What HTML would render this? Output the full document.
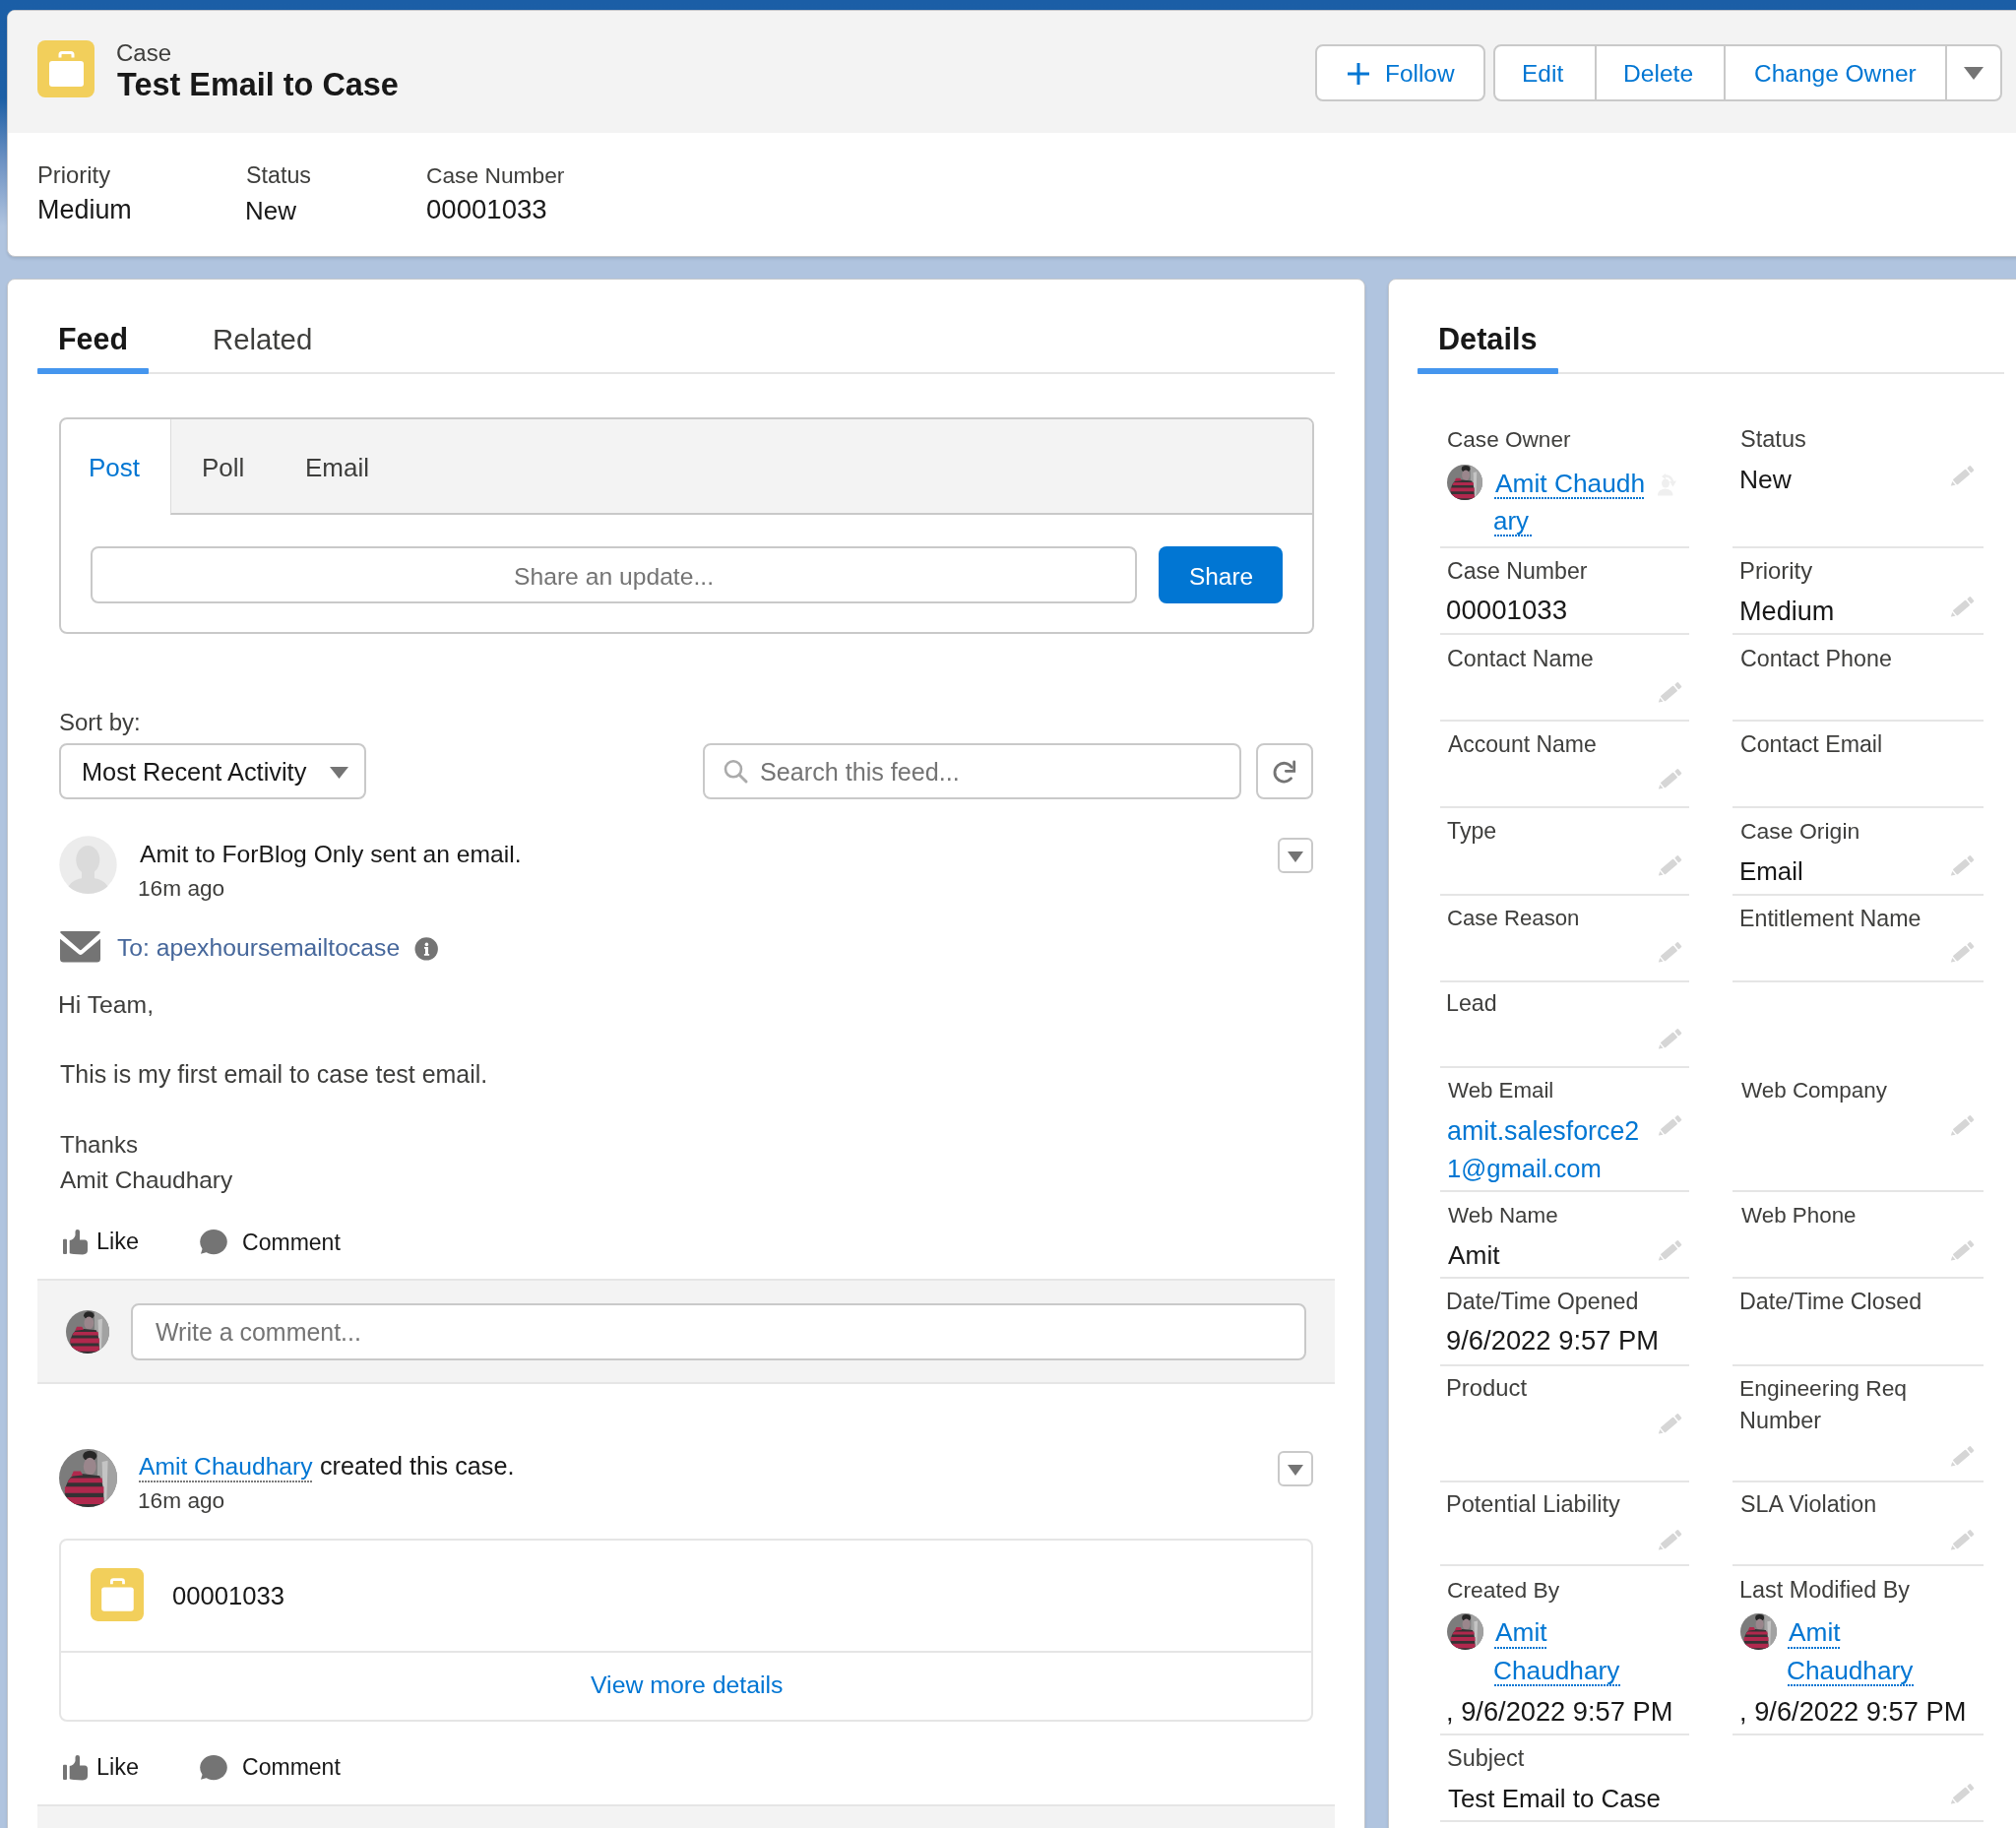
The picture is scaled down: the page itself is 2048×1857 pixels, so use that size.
<!DOCTYPE html>
<html><head><meta charset="utf-8"><title>Case</title>
<style>
html,body{margin:0;padding:0;}
body{width:2048px;height:1857px;overflow:hidden;position:relative;font-family:"Liberation Sans",sans-serif;
background:linear-gradient(to bottom,#1b5ea6 0px,#1c5fa6 100px,#6f93c4 165px,#b0c4df 230px,#b0c4df 100%);}
.t{position:absolute;white-space:nowrap;-webkit-font-smoothing:antialiased;will-change:transform;}
.r{position:absolute;}
</style></head><body>
<div class="r" style="left:7px;top:10px;width:2093px;height:251px;background:#fff;border:1px solid #c4c7cc;border-radius:8px;box-sizing:border-box;box-shadow:0 2px 3px rgba(0,0,0,0.10);"></div>
<div class="r" style="left:8px;top:11px;width:2092px;height:124px;background:#f3f3f3;border-radius:7px 0 0 0;"></div>
<div class="r" style="left:38px;top:41px;width:58px;height:58px;background:#f2cf5b;border-radius:8.0px;"></div>
<svg class="r" style="left:38px;top:41px" width="58" height="58" viewBox="0 0 58 58"><rect x="12" y="21" width="35" height="26" rx="3" fill="#fff"/><path d="M23 17.5 v-3 a2 2 0 0 1 2 -2 h9 a2 2 0 0 1 2 2 v3" stroke="#fff" stroke-width="3" fill="none"/></svg>
<div class="t" style="left:118.00px;top:38.87px;font-size:24.02px;line-height:30px;color:#3e3e3c;">Case</div>
<div class="t" style="left:118.88px;top:66.26px;font-size:32.43px;line-height:41px;color:#181818;font-weight:700;">Test Email to Case</div>
<div class="r" style="left:1336px;top:45px;width:173px;height:58px;background:#fff;border:2px solid #c9c9c9;border-radius:8px;box-sizing:border-box;"></div>
<svg class="r" style="left:1369px;top:64px" width="22" height="22" viewBox="0 0 22 22"><path d="M11 0 V22 M0 11 H22" stroke="#0176d3" stroke-width="3"/></svg>
<div class="t" style="left:1406.85px;top:59.14px;font-size:24.41px;line-height:31px;color:#0176d3;">Follow</div>
<div class="r" style="left:1517px;top:45px;width:517px;height:58px;background:#fff;border:2px solid #c9c9c9;border-radius:8px;box-sizing:border-box;"></div>
<div class="r" style="left:1620px;top:47px;width:2px;height:54px;background:#c9c9c9;"></div>
<div class="r" style="left:1751px;top:47px;width:2px;height:54px;background:#c9c9c9;"></div>
<div class="r" style="left:1976px;top:47px;width:2px;height:54px;background:#c9c9c9;"></div>
<div class="t" style="left:1546.44px;top:59.01px;font-size:24.50px;line-height:31px;color:#0176d3;">Edit</div>
<div class="t" style="left:1649.43px;top:58.97px;font-size:24.60px;line-height:31px;color:#0176d3;">Delete</div>
<div class="t" style="left:1782.28px;top:59.01px;font-size:24.49px;line-height:31px;color:#0176d3;">Change Owner</div>
<svg class="r" style="left:1995px;top:68px" width="20" height="13" viewBox="0 0 20 13"><path d="M0 0 H20 L10 13 Z" fill="#747474"/></svg>
<div class="t" style="left:37.50px;top:163.25px;font-size:23.80px;line-height:30px;color:#3e3e3c;">Priority</div>
<div class="t" style="left:37.54px;top:196.46px;font-size:26.95px;line-height:34px;color:#181818;">Medium</div>
<div class="t" style="left:249.84px;top:163.93px;font-size:23.27px;line-height:29px;color:#3e3e3c;">Status</div>
<div class="t" style="left:249.23px;top:197.81px;font-size:25.94px;line-height:32px;color:#181818;">New</div>
<div class="t" style="left:432.76px;top:164.41px;font-size:22.77px;line-height:28px;color:#3e3e3c;">Case Number</div>
<div class="t" style="left:432.80px;top:196.14px;font-size:27.57px;line-height:34px;color:#181818;">00001033</div>
<div class="r" style="left:7px;top:283px;width:1380px;height:1717px;background:#fff;border:1px solid #c4c7cc;border-radius:8px;box-sizing:border-box;box-shadow:0 2px 3px rgba(0,0,0,0.10);"></div>
<div class="t" style="left:59.12px;top:324.95px;font-size:30.43px;line-height:38px;color:#181818;font-weight:700;">Feed</div>
<div class="t" style="left:216.35px;top:325.81px;font-size:29.39px;line-height:37px;color:#3e3e3c;">Related</div>
<div class="r" style="left:38px;top:378px;width:1318px;height:2px;background:#e5e5e5;"></div>
<div class="r" style="left:38px;top:374px;width:113px;height:6px;background:#4596ee;border-radius:1px;"></div>
<div class="r" style="left:60px;top:424px;width:1275px;height:220px;background:#fff;border:2px solid #c9c9c9;border-radius:8px;box-sizing:border-box;"></div>
<div class="r" style="left:173px;top:426px;width:1160px;height:97px;background:#f3f3f3;border-left:1px solid #dcdcdc;border-bottom:2px solid #c9c9c9;box-sizing:border-box;border-radius:0 6px 0 0;"></div>
<div class="t" style="left:90.22px;top:458.59px;font-size:26.00px;line-height:32px;color:#0176d3;">Post</div>
<div class="t" style="left:204.72px;top:458.59px;font-size:26.00px;line-height:32px;color:#3e3e3c;">Poll</div>
<div class="t" style="left:309.52px;top:458.59px;font-size:26.00px;line-height:32px;color:#3e3e3c;">Email</div>
<div class="r" style="left:92px;top:555px;width:1063px;height:58px;background:#fff;border:2px solid #c9c9c9;border-radius:8px;box-sizing:border-box;"></div>
<div class="t" style="left:521.97px;top:569.54px;font-size:24.68px;line-height:31px;color:#747474;">Share an update...</div>
<div class="r" style="left:1177px;top:555px;width:126px;height:58px;background:#0176d3;border-radius:8px;"></div>
<div class="t" style="left:1207.78px;top:569.53px;font-size:24.42px;line-height:31px;color:#fff;">Share</div>
<div class="t" style="left:59.70px;top:719.18px;font-size:23.99px;line-height:30px;color:#3e3e3c;">Sort by:</div>
<div class="r" style="left:60px;top:755px;width:312px;height:57px;background:#fff;border:2px solid #c9c9c9;border-radius:8px;box-sizing:border-box;"></div>
<div class="t" style="left:82.67px;top:768.20px;font-size:25.37px;line-height:32px;color:#181818;">Most Recent Activity</div>
<svg class="r" style="left:335px;top:779px" width="19" height="12" viewBox="0 0 19 12"><path d="M0 0 H19 L9.5 12 Z" fill="#747474"/></svg>
<div class="r" style="left:714px;top:755px;width:547px;height:57px;background:#fff;border:2px solid #c9c9c9;border-radius:8px;box-sizing:border-box;"></div>
<svg class="r" style="left:735px;top:772px" width="25" height="24" viewBox="0 0 25 24"><circle cx="10" cy="9.3" r="8" stroke="#ababab" stroke-width="2.6" fill="none"/><path d="M16.2 15.2 L23 22" stroke="#ababab" stroke-width="2.9" stroke-linecap="round"/></svg>
<div class="t" style="left:772.34px;top:768.98px;font-size:25.16px;line-height:31px;color:#747474;">Search this feed...</div>
<div class="r" style="left:1276px;top:755px;width:58px;height:57px;background:#fff;border:2px solid #c9c9c9;border-radius:8px;box-sizing:border-box;"></div>
<svg class="r" style="left:1293px;top:772px" width="25" height="25" viewBox="0 0 25 25"><path d="M19.1 7.3 A9.4 9.4 0 1 0 18.6 18.7" stroke="#747474" stroke-width="2.8" fill="none" stroke-linecap="round"/><path d="M13.3 11.3 H21.7 V1.9" stroke="#747474" stroke-width="2.8" fill="none" stroke-linecap="round" stroke-linejoin="miter"/></svg>
<svg class="r" style="left:60px;top:849px" width="59" height="59" viewBox="0 0 59 59"><circle cx="29.5" cy="29.5" r="29.2" fill="#ececec"/><ellipse cx="29.3" cy="24.5" rx="12" ry="14.5" fill="#dbdbdb"/><rect x="23" y="32" width="13" height="13" fill="#dbdbdb"/><path d="M9.5 51.5 Q14 44 24 43 H35 Q45 44 49.5 51.5 Q41 59 29.5 59 Q18 59 9.5 51.5Z" fill="#dbdbdb"/></svg>
<div class="t" style="left:141.80px;top:852.45px;font-size:24.65px;line-height:31px;color:#181818;">Amit to ForBlog Only sent an email.</div>
<div class="t" style="left:139.99px;top:887.54px;font-size:22.68px;line-height:28px;color:#3e3e3c;">16m ago</div>
<div class="r" style="left:1298px;top:851px;width:36px;height:36px;background:#fff;border:2px solid #c9c9c9;border-radius:6px;box-sizing:border-box;"></div>
<svg class="r" style="left:1308px;top:865px" width="16" height="12" viewBox="0 0 16 12"><path d="M0 0 H16 L8 11 Z" fill="#747474"/></svg>
<svg class="r" style="left:61px;top:946px" width="41" height="32" viewBox="0 0 41 32"><path d="M1.5 0 H39.5 Q41.5 0 40.5 1.8 L21.8 18.8 Q20.8 19.7 19.8 18.8 L0.5 1.8 Q-0.5 0 1.5 0 Z" fill="#747474"/><path d="M0 7.8 L19 23.2 Q20.8 24.6 22.6 23.2 L41 7.8 V28 Q41 31.5 37.5 31.5 H3.5 Q0 31.5 0 28 Z" fill="#747474"/></svg>
<div class="t" style="left:118.91px;top:946.63px;font-size:24.72px;line-height:31px;color:#46679b;">To: apexhoursemailtocase</div>
<svg class="r" style="left:421px;top:952px" width="25" height="25" viewBox="0 0 25 25"><circle cx="12.2" cy="11.9" r="11.7" fill="#747474"/><circle cx="12.4" cy="7.4" r="1.8" fill="#fff"/><path d="M10 10 H14 V17 H15.1 V18.8 H9.9 V17 H11 V11.8 H10 Z" fill="#fff"/></svg>
<div class="t" style="left:59.22px;top:1005.23px;font-size:24.73px;line-height:31px;color:#3e3e3c;">Hi Team,</div>
<div class="t" style="left:60.70px;top:1075.54px;font-size:24.97px;line-height:31px;color:#3e3e3c;">This is my first email to case test email.</div>
<div class="t" style="left:60.72px;top:1147.75px;font-size:24.10px;line-height:30px;color:#3e3e3c;">Thanks</div>
<div class="t" style="left:61.20px;top:1182.62px;font-size:24.45px;line-height:31px;color:#3e3e3c;">Amit Chaudhary</div>
<svg class="r" style="left:63px;top:1249px" width="27" height="26" viewBox="0 0 27 26"><rect x="1" y="9.7" width="4" height="15.3" rx="1" fill="#747474"/><path d="M7.7 11 Q12 10.5 13.5 6 V2 Q13.5 0 15.75 0 Q18 0 18 2 V10.5 H23 Q26 10.5 26 14 V21 Q26 25.4 21 25.4 L12 25 Q7.7 24.6 7.7 24 Z" fill="#747474"/></svg>
<div class="t" style="left:97.52px;top:1247.35px;font-size:23.51px;line-height:29px;color:#181818;">Like</div>
<svg class="r" style="left:203px;top:1249px" width="28" height="26" viewBox="0 0 28 26"><ellipse cx="14" cy="12.6" rx="13.8" ry="12.6" fill="#747474"/><path d="M3 18 L1 24.8 L9 22.5 Z" fill="#747474"/></svg>
<div class="t" style="left:245.95px;top:1247.51px;font-size:23.04px;line-height:29px;color:#181818;">Comment</div>
<div class="r" style="left:38px;top:1299px;width:1318px;height:107px;background:#f3f3f3;border-top:2px solid #e5e5e5;border-bottom:2px solid #e5e5e5;box-sizing:border-box;"></div>
<svg class="r" style="left:67px;top:1331px" width="44" height="44" viewBox="0 0 100 100"><defs><clipPath id="c1"><circle cx="50" cy="50" r="50"/></clipPath></defs><g clip-path="url(#c1)"><rect width="100" height="100" fill="#7c7c7c"/><rect x="66" width="34" height="100" fill="#a2a2a2"/><path d="M74 22 L84 20 L82 88 L76 90Z" fill="#c4c4c4"/><ellipse cx="53" cy="12" rx="12" ry="9" fill="#262626"/><ellipse cx="53" cy="30" rx="11" ry="15" fill="#9a868c"/><path d="M12 100 L10 72 Q13 52 26 44 L42 43 L70 46 Q78 60 77 100Z" fill="#343234"/><path d="M20 50 L74 50 L75 58 L15 58 Q16 53 20 50Z M25 38 L37 38 L41 45 L21 47Z M10 65 H77 V76 H10Z M13 83 H77 V95 H13Z" fill="#b0284d"/></g></svg>
<div class="r" style="left:133px;top:1324px;width:1194px;height:58px;background:#fff;border:2px solid #c9c9c9;border-radius:8px;box-sizing:border-box;"></div>
<div class="t" style="left:157.90px;top:1337.95px;font-size:24.96px;line-height:31px;color:#747474;">Write a comment...</div>
<svg class="r" style="left:60px;top:1472px" width="59" height="59" viewBox="0 0 100 100"><defs><clipPath id="c2"><circle cx="50" cy="50" r="50"/></clipPath></defs><g clip-path="url(#c2)"><rect width="100" height="100" fill="#7c7c7c"/><rect x="66" width="34" height="100" fill="#a2a2a2"/><path d="M74 22 L84 20 L82 88 L76 90Z" fill="#c4c4c4"/><ellipse cx="53" cy="12" rx="12" ry="9" fill="#262626"/><ellipse cx="53" cy="30" rx="11" ry="15" fill="#9a868c"/><path d="M12 100 L10 72 Q13 52 26 44 L42 43 L70 46 Q78 60 77 100Z" fill="#343234"/><path d="M20 50 L74 50 L75 58 L15 58 Q16 53 20 50Z M25 38 L37 38 L41 45 L21 47Z M10 65 H77 V76 H10Z M13 83 H77 V95 H13Z" fill="#b0284d"/></g></svg>
<div class="t" style="left:141.30px;top:1474.36px;font-size:24.63px;line-height:31px;color:#0176d3;">Amit Chaudhary</div>
<div class="r" style="left:141px;top:1503.5px;width:177px;height:2px;background:repeating-linear-gradient(90deg,#7a7a7a 0 2px,transparent 2px 3px);"></div>
<div class="t" style="left:324.79px;top:1474.17px;font-size:25.19px;line-height:31px;color:#181818;">created this case.</div>
<div class="t" style="left:139.99px;top:1510.04px;font-size:22.68px;line-height:28px;color:#3e3e3c;">16m ago</div>
<div class="r" style="left:1298px;top:1474px;width:36px;height:36px;background:#fff;border:2px solid #c9c9c9;border-radius:6px;box-sizing:border-box;"></div>
<svg class="r" style="left:1308px;top:1488px" width="16" height="12" viewBox="0 0 16 12"><path d="M0 0 H16 L8 11 Z" fill="#747474"/></svg>
<div class="r" style="left:60px;top:1563px;width:1274px;height:186px;background:#fff;border:2px solid #e5e5e5;border-radius:8px;box-sizing:border-box;"></div>
<div class="r" style="left:62px;top:1677px;width:1270px;height:2px;background:#e5e5e5;"></div>
<div class="r" style="left:92px;top:1593px;width:54px;height:54px;background:#f2cf5b;border-radius:7.4px;"></div>
<svg class="r" style="left:92px;top:1593px" width="54" height="54" viewBox="0 0 58 58"><rect x="12" y="21" width="35" height="26" rx="3" fill="#fff"/><path d="M23 17.5 v-3 a2 2 0 0 1 2 -2 h9 a2 2 0 0 1 2 2 v3" stroke="#fff" stroke-width="3" fill="none"/></svg>
<div class="t" style="left:175.47px;top:1605.01px;font-size:25.65px;line-height:32px;color:#181818;">00001033</div>
<div class="t" style="left:599.75px;top:1696.19px;font-size:24.83px;line-height:31px;color:#0176d3;">View more details</div>
<svg class="r" style="left:63px;top:1782.7px" width="27" height="26.0" viewBox="0 0 27 26.0"><rect x="1" y="9.7" width="4" height="15.3" rx="1" fill="#747474"/><path d="M7.7 11 Q12 10.5 13.5 6 V2 Q13.5 0 15.75 0 Q18 0 18 2 V10.5 H23 Q26 10.5 26 14 V21 Q26 25.4 21 25.4 L12 25 Q7.7 24.6 7.7 24 Z" fill="#747474"/></svg>
<div class="t" style="left:97.52px;top:1781.05px;font-size:23.51px;line-height:29px;color:#181818;">Like</div>
<svg class="r" style="left:203px;top:1782.7px" width="28" height="26.0" viewBox="0 0 28 26.0"><ellipse cx="14" cy="12.6" rx="13.8" ry="12.6" fill="#747474"/><path d="M3 18 L1 24.8 L9 22.5 Z" fill="#747474"/></svg>
<div class="t" style="left:245.95px;top:1781.21px;font-size:23.04px;line-height:29px;color:#181818;">Comment</div>
<div class="r" style="left:38px;top:1833px;width:1318px;height:67px;background:#f3f3f3;border-top:2px solid #e5e5e5;box-sizing:border-box;"></div>
<div class="r" style="left:1410px;top:283px;width:690px;height:1717px;background:#fff;border:1px solid #c4c7cc;border-radius:8px;box-sizing:border-box;box-shadow:0 2px 3px rgba(0,0,0,0.10);"></div>
<div class="t" style="left:1461.36px;top:324.88px;font-size:30.63px;line-height:38px;color:#181818;font-weight:700;">Details</div>
<div class="r" style="left:1440px;top:378px;width:596px;height:2px;background:#e5e5e5;"></div>
<div class="r" style="left:1440px;top:374px;width:143px;height:6px;background:#4596ee;border-radius:1px;"></div>
<div class="t" style="left:1469.57px;top:433.17px;font-size:22.59px;line-height:28px;color:#3e3e3c;">Case Owner</div>
<div class="t" style="left:1767.62px;top:432.03px;font-size:23.56px;line-height:29px;color:#3e3e3c;">Status</div>
<svg class="r" style="left:1470px;top:472px" width="36" height="36" viewBox="0 0 100 100"><defs><clipPath id="c3"><circle cx="50" cy="50" r="50"/></clipPath></defs><g clip-path="url(#c3)"><rect width="100" height="100" fill="#7c7c7c"/><rect x="66" width="34" height="100" fill="#a2a2a2"/><path d="M74 22 L84 20 L82 88 L76 90Z" fill="#c4c4c4"/><ellipse cx="53" cy="12" rx="12" ry="9" fill="#262626"/><ellipse cx="53" cy="30" rx="11" ry="15" fill="#9a868c"/><path d="M12 100 L10 72 Q13 52 26 44 L42 43 L70 46 Q78 60 77 100Z" fill="#343234"/><path d="M20 50 L74 50 L75 58 L15 58 Q16 53 20 50Z M25 38 L37 38 L41 45 L21 47Z M10 65 H77 V76 H10Z M13 83 H77 V95 H13Z" fill="#b0284d"/></g></svg>
<div class="t" style="left:1518.50px;top:474.78px;font-size:26.31px;line-height:33px;color:#0176d3;">Amit Chaudh</div>
<div class="r" style="left:1518px;top:505px;width:152px;height:2px;background:repeating-linear-gradient(90deg,#0176d3 0 2px,transparent 2px 3px);"></div>
<div class="t" style="left:1517.46px;top:513.29px;font-size:26.00px;line-height:32px;color:#0176d3;">ary</div>
<div class="r" style="left:1518px;top:543px;width:39px;height:2px;background:repeating-linear-gradient(90deg,#0176d3 0 2px,transparent 2px 3px);"></div>
<svg class="r" style="left:1684px;top:480px" width="22" height="24" viewBox="0 0 22 24"><ellipse cx="8" cy="11" rx="4" ry="4.5" fill="#efefef"/><path d="M0 23.6 Q0 17 7.7 16.5 Q15.5 17 15.5 23.6Z" fill="#efefef"/><path d="M6 4 Q13 2 15.5 10" stroke="#efefef" stroke-width="2.4" fill="none"/><path d="M12 9 L19 8.5 L15.5 14.5Z M4 4 L8 1 L8 7Z" fill="#efefef"/></svg>
<div class="t" style="left:1766.89px;top:471.15px;font-size:26.41px;line-height:33px;color:#181818;">New</div>
<svg class="r" style="left:1973px;top:466px" width="36" height="36" viewBox="0 0 36 36"><g transform="rotate(-40 19.5 18.5)" fill="#d6d6d6"><rect x="11" y="15" width="17" height="7" rx="0.8"/><rect x="29.5" y="15.25" width="4.5" height="6.5" rx="1"/><path d="M9.6 16 L9.6 21 L5.6 18.5 Z"/></g></svg>
<div class="r" style="left:1463px;top:555px;width:253px;height:2px;background:#e5e5e5;"></div>
<div class="r" style="left:1760px;top:555px;width:255px;height:2px;background:#e5e5e5;"></div>
<div class="t" style="left:1469.55px;top:566.49px;font-size:23.10px;line-height:29px;color:#3e3e3c;">Case Number</div>
<div class="t" style="left:1767.09px;top:565.48px;font-size:23.84px;line-height:30px;color:#3e3e3c;">Priority</div>
<div class="t" style="left:1469.39px;top:602.41px;font-size:27.67px;line-height:35px;color:#181818;">00001033</div>
<div class="t" style="left:1766.83px;top:603.61px;font-size:27.10px;line-height:34px;color:#181818;">Medium</div>
<svg class="r" style="left:1973px;top:599px" width="36" height="36" viewBox="0 0 36 36"><g transform="rotate(-40 19.5 18.5)" fill="#d6d6d6"><rect x="11" y="15" width="17" height="7" rx="0.8"/><rect x="29.5" y="15.25" width="4.5" height="6.5" rx="1"/><path d="M9.6 16 L9.6 21 L5.6 18.5 Z"/></g></svg>
<div class="r" style="left:1463px;top:643px;width:253px;height:2px;background:#e5e5e5;"></div>
<div class="r" style="left:1760px;top:643px;width:255px;height:2px;background:#e5e5e5;"></div>
<div class="t" style="left:1469.54px;top:654.83px;font-size:23.29px;line-height:29px;color:#3e3e3c;">Contact Name</div>
<div class="t" style="left:1767.64px;top:654.84px;font-size:23.25px;line-height:29px;color:#3e3e3c;">Contact Phone</div>
<svg class="r" style="left:1676px;top:686px" width="36" height="36" viewBox="0 0 36 36"><g transform="rotate(-40 19.5 18.5)" fill="#d6d6d6"><rect x="11" y="15" width="17" height="7" rx="0.8"/><rect x="29.5" y="15.25" width="4.5" height="6.5" rx="1"/><path d="M9.6 16 L9.6 21 L5.6 18.5 Z"/></g></svg>
<div class="r" style="left:1463px;top:731px;width:253px;height:2px;background:#e5e5e5;"></div>
<div class="r" style="left:1760px;top:731px;width:255px;height:2px;background:#e5e5e5;"></div>
<div class="t" style="left:1470.70px;top:742.23px;font-size:22.99px;line-height:29px;color:#3e3e3c;">Account Name</div>
<div class="t" style="left:1767.64px;top:742.17px;font-size:23.16px;line-height:29px;color:#3e3e3c;">Contact Email</div>
<svg class="r" style="left:1676px;top:774px" width="36" height="36" viewBox="0 0 36 36"><g transform="rotate(-40 19.5 18.5)" fill="#d6d6d6"><rect x="11" y="15" width="17" height="7" rx="0.8"/><rect x="29.5" y="15.25" width="4.5" height="6.5" rx="1"/><path d="M9.6 16 L9.6 21 L5.6 18.5 Z"/></g></svg>
<div class="r" style="left:1463px;top:819px;width:253px;height:2px;background:#e5e5e5;"></div>
<div class="r" style="left:1760px;top:819px;width:255px;height:2px;background:#e5e5e5;"></div>
<div class="t" style="left:1470.24px;top:829.97px;font-size:23.18px;line-height:29px;color:#3e3e3c;">Type</div>
<div class="t" style="left:1767.65px;top:830.04px;font-size:22.97px;line-height:29px;color:#3e3e3c;">Case Origin</div>
<div class="t" style="left:1766.73px;top:868.72px;font-size:25.91px;line-height:32px;color:#181818;">Email</div>
<svg class="r" style="left:1676px;top:862px" width="36" height="36" viewBox="0 0 36 36"><g transform="rotate(-40 19.5 18.5)" fill="#d6d6d6"><rect x="11" y="15" width="17" height="7" rx="0.8"/><rect x="29.5" y="15.25" width="4.5" height="6.5" rx="1"/><path d="M9.6 16 L9.6 21 L5.6 18.5 Z"/></g></svg>
<svg class="r" style="left:1973px;top:862px" width="36" height="36" viewBox="0 0 36 36"><g transform="rotate(-40 19.5 18.5)" fill="#d6d6d6"><rect x="11" y="15" width="17" height="7" rx="0.8"/><rect x="29.5" y="15.25" width="4.5" height="6.5" rx="1"/><path d="M9.6 16 L9.6 21 L5.6 18.5 Z"/></g></svg>
<div class="r" style="left:1463px;top:908px;width:253px;height:2px;background:#e5e5e5;"></div>
<div class="r" style="left:1760px;top:908px;width:255px;height:2px;background:#e5e5e5;"></div>
<div class="t" style="left:1469.59px;top:919.41px;font-size:22.19px;line-height:28px;color:#3e3e3c;">Case Reason</div>
<div class="t" style="left:1766.94px;top:918.55px;font-size:23.22px;line-height:29px;color:#3e3e3c;">Entitlement Name</div>
<svg class="r" style="left:1676px;top:950px" width="36" height="36" viewBox="0 0 36 36"><g transform="rotate(-40 19.5 18.5)" fill="#d6d6d6"><rect x="11" y="15" width="17" height="7" rx="0.8"/><rect x="29.5" y="15.25" width="4.5" height="6.5" rx="1"/><path d="M9.6 16 L9.6 21 L5.6 18.5 Z"/></g></svg>
<svg class="r" style="left:1973px;top:950px" width="36" height="36" viewBox="0 0 36 36"><g transform="rotate(-40 19.5 18.5)" fill="#d6d6d6"><rect x="11" y="15" width="17" height="7" rx="0.8"/><rect x="29.5" y="15.25" width="4.5" height="6.5" rx="1"/><path d="M9.6 16 L9.6 21 L5.6 18.5 Z"/></g></svg>
<div class="r" style="left:1463px;top:996px;width:253px;height:2px;background:#e5e5e5;"></div>
<div class="r" style="left:1760px;top:996px;width:255px;height:2px;background:#e5e5e5;"></div>
<div class="t" style="left:1468.84px;top:1005.45px;font-size:23.22px;line-height:29px;color:#3e3e3c;">Lead</div>
<svg class="r" style="left:1676px;top:1038px" width="36" height="36" viewBox="0 0 36 36"><g transform="rotate(-40 19.5 18.5)" fill="#d6d6d6"><rect x="11" y="15" width="17" height="7" rx="0.8"/><rect x="29.5" y="15.25" width="4.5" height="6.5" rx="1"/><path d="M9.6 16 L9.6 21 L5.6 18.5 Z"/></g></svg>
<div class="r" style="left:1463px;top:1083px;width:253px;height:2px;background:#e5e5e5;"></div>
<div class="t" style="left:1470.70px;top:1094.07px;font-size:22.29px;line-height:28px;color:#3e3e3c;">Web Email</div>
<div class="t" style="left:1768.80px;top:1094.02px;font-size:22.43px;line-height:28px;color:#3e3e3c;">Web Company</div>
<div class="t" style="left:1469.63px;top:1131.70px;font-size:26.82px;line-height:34px;color:#0176d3;">amit.salesforce2</div>
<div class="t" style="left:1469.55px;top:1171.43px;font-size:25.59px;line-height:32px;color:#0176d3;">1@gmail.com</div>
<svg class="r" style="left:1676px;top:1126px" width="36" height="36" viewBox="0 0 36 36"><g transform="rotate(-40 19.5 18.5)" fill="#d6d6d6"><rect x="11" y="15" width="17" height="7" rx="0.8"/><rect x="29.5" y="15.25" width="4.5" height="6.5" rx="1"/><path d="M9.6 16 L9.6 21 L5.6 18.5 Z"/></g></svg>
<svg class="r" style="left:1973px;top:1126px" width="36" height="36" viewBox="0 0 36 36"><g transform="rotate(-40 19.5 18.5)" fill="#d6d6d6"><rect x="11" y="15" width="17" height="7" rx="0.8"/><rect x="29.5" y="15.25" width="4.5" height="6.5" rx="1"/><path d="M9.6 16 L9.6 21 L5.6 18.5 Z"/></g></svg>
<div class="r" style="left:1463px;top:1209px;width:253px;height:2px;background:#e5e5e5;"></div>
<div class="r" style="left:1760px;top:1209px;width:255px;height:2px;background:#e5e5e5;"></div>
<div class="t" style="left:1470.70px;top:1220.83px;font-size:22.41px;line-height:28px;color:#3e3e3c;">Web Name</div>
<div class="t" style="left:1768.80px;top:1220.84px;font-size:22.38px;line-height:28px;color:#3e3e3c;">Web Phone</div>
<div class="t" style="left:1470.60px;top:1258.89px;font-size:26.28px;line-height:33px;color:#181818;">Amit</div>
<svg class="r" style="left:1676px;top:1253px" width="36" height="36" viewBox="0 0 36 36"><g transform="rotate(-40 19.5 18.5)" fill="#d6d6d6"><rect x="11" y="15" width="17" height="7" rx="0.8"/><rect x="29.5" y="15.25" width="4.5" height="6.5" rx="1"/><path d="M9.6 16 L9.6 21 L5.6 18.5 Z"/></g></svg>
<svg class="r" style="left:1973px;top:1253px" width="36" height="36" viewBox="0 0 36 36"><g transform="rotate(-40 19.5 18.5)" fill="#d6d6d6"><rect x="11" y="15" width="17" height="7" rx="0.8"/><rect x="29.5" y="15.25" width="4.5" height="6.5" rx="1"/><path d="M9.6 16 L9.6 21 L5.6 18.5 Z"/></g></svg>
<div class="r" style="left:1463px;top:1297px;width:253px;height:2px;background:#e5e5e5;"></div>
<div class="r" style="left:1760px;top:1297px;width:255px;height:2px;background:#e5e5e5;"></div>
<div class="t" style="left:1468.84px;top:1308.24px;font-size:23.24px;line-height:29px;color:#3e3e3c;">Date/Time Opened</div>
<div class="t" style="left:1766.94px;top:1308.24px;font-size:23.26px;line-height:29px;color:#3e3e3c;">Date/Time Closed</div>
<div class="t" style="left:1469.23px;top:1345.11px;font-size:27.38px;line-height:34px;color:#181818;">9/6/2022 9:57 PM</div>
<div class="r" style="left:1463px;top:1386px;width:253px;height:2px;background:#e5e5e5;"></div>
<div class="r" style="left:1760px;top:1386px;width:255px;height:2px;background:#e5e5e5;"></div>
<div class="t" style="left:1468.80px;top:1395.35px;font-size:23.81px;line-height:30px;color:#3e3e3c;">Product</div>
<div class="t" style="left:1766.97px;top:1396.18px;font-size:22.83px;line-height:29px;color:#3e3e3c;">Engineering Req</div>
<div class="t" style="left:1766.93px;top:1429.09px;font-size:23.38px;line-height:29px;color:#3e3e3c;">Number</div>
<svg class="r" style="left:1676px;top:1429px" width="36" height="36" viewBox="0 0 36 36"><g transform="rotate(-40 19.5 18.5)" fill="#d6d6d6"><rect x="11" y="15" width="17" height="7" rx="0.8"/><rect x="29.5" y="15.25" width="4.5" height="6.5" rx="1"/><path d="M9.6 16 L9.6 21 L5.6 18.5 Z"/></g></svg>
<svg class="r" style="left:1973px;top:1462px" width="36" height="36" viewBox="0 0 36 36"><g transform="rotate(-40 19.5 18.5)" fill="#d6d6d6"><rect x="11" y="15" width="17" height="7" rx="0.8"/><rect x="29.5" y="15.25" width="4.5" height="6.5" rx="1"/><path d="M9.6 16 L9.6 21 L5.6 18.5 Z"/></g></svg>
<div class="r" style="left:1463px;top:1504px;width:253px;height:2px;background:#e5e5e5;"></div>
<div class="r" style="left:1760px;top:1504px;width:255px;height:2px;background:#e5e5e5;"></div>
<div class="t" style="left:1468.82px;top:1514.33px;font-size:23.56px;line-height:29px;color:#3e3e3c;">Potential Liability</div>
<div class="t" style="left:1767.64px;top:1514.42px;font-size:23.30px;line-height:29px;color:#3e3e3c;">SLA Violation</div>
<svg class="r" style="left:1676px;top:1547px" width="36" height="36" viewBox="0 0 36 36"><g transform="rotate(-40 19.5 18.5)" fill="#d6d6d6"><rect x="11" y="15" width="17" height="7" rx="0.8"/><rect x="29.5" y="15.25" width="4.5" height="6.5" rx="1"/><path d="M9.6 16 L9.6 21 L5.6 18.5 Z"/></g></svg>
<svg class="r" style="left:1973px;top:1547px" width="36" height="36" viewBox="0 0 36 36"><g transform="rotate(-40 19.5 18.5)" fill="#d6d6d6"><rect x="11" y="15" width="17" height="7" rx="0.8"/><rect x="29.5" y="15.25" width="4.5" height="6.5" rx="1"/><path d="M9.6 16 L9.6 21 L5.6 18.5 Z"/></g></svg>
<div class="r" style="left:1463px;top:1589px;width:253px;height:2px;background:#e5e5e5;"></div>
<div class="r" style="left:1760px;top:1589px;width:255px;height:2px;background:#e5e5e5;"></div>
<div class="t" style="left:1469.56px;top:1600.78px;font-size:22.85px;line-height:29px;color:#3e3e3c;">Created By</div>
<div class="t" style="left:1766.93px;top:1600.58px;font-size:23.42px;line-height:29px;color:#3e3e3c;">Last Modified By</div>
<svg class="r" style="left:1470px;top:1639px" width="37" height="37" viewBox="0 0 100 100"><defs><clipPath id="c4"><circle cx="50" cy="50" r="50"/></clipPath></defs><g clip-path="url(#c4)"><rect width="100" height="100" fill="#7c7c7c"/><rect x="66" width="34" height="100" fill="#a2a2a2"/><path d="M74 22 L84 20 L82 88 L76 90Z" fill="#c4c4c4"/><ellipse cx="53" cy="12" rx="12" ry="9" fill="#262626"/><ellipse cx="53" cy="30" rx="11" ry="15" fill="#9a868c"/><path d="M12 100 L10 72 Q13 52 26 44 L42 43 L70 46 Q78 60 77 100Z" fill="#343234"/><path d="M20 50 L74 50 L75 58 L15 58 Q16 53 20 50Z M25 38 L37 38 L41 45 L21 47Z M10 65 H77 V76 H10Z M13 83 H77 V95 H13Z" fill="#b0284d"/></g></svg>
<div class="t" style="left:1518.50px;top:1641.59px;font-size:26.28px;line-height:33px;color:#0176d3;">Amit</div>
<div class="r" style="left:1518px;top:1673px;width:54px;height:2px;background:repeating-linear-gradient(90deg,#0176d3 0 2px,transparent 2px 3px);"></div>
<div class="t" style="left:1517.19px;top:1680.50px;font-size:26.26px;line-height:33px;color:#0176d3;">Chaudhary</div>
<div class="r" style="left:1518px;top:1711px;width:128px;height:2px;background:repeating-linear-gradient(90deg,#0176d3 0 2px,transparent 2px 3px);"></div>
<div class="t" style="left:1469.15px;top:1721.95px;font-size:27.27px;line-height:34px;color:#181818;">, 9/6/2022 9:57 PM</div>
<svg class="r" style="left:1768px;top:1639px" width="37" height="37" viewBox="0 0 100 100"><defs><clipPath id="c5"><circle cx="50" cy="50" r="50"/></clipPath></defs><g clip-path="url(#c5)"><rect width="100" height="100" fill="#7c7c7c"/><rect x="66" width="34" height="100" fill="#a2a2a2"/><path d="M74 22 L84 20 L82 88 L76 90Z" fill="#c4c4c4"/><ellipse cx="53" cy="12" rx="12" ry="9" fill="#262626"/><ellipse cx="53" cy="30" rx="11" ry="15" fill="#9a868c"/><path d="M12 100 L10 72 Q13 52 26 44 L42 43 L70 46 Q78 60 77 100Z" fill="#343234"/><path d="M20 50 L74 50 L75 58 L15 58 Q16 53 20 50Z M25 38 L37 38 L41 45 L21 47Z M10 65 H77 V76 H10Z M13 83 H77 V95 H13Z" fill="#b0284d"/></g></svg>
<div class="t" style="left:1816.50px;top:1641.59px;font-size:26.28px;line-height:33px;color:#0176d3;">Amit</div>
<div class="r" style="left:1816px;top:1673px;width:54px;height:2px;background:repeating-linear-gradient(90deg,#0176d3 0 2px,transparent 2px 3px);"></div>
<div class="t" style="left:1815.19px;top:1680.50px;font-size:26.26px;line-height:33px;color:#0176d3;">Chaudhary</div>
<div class="r" style="left:1816px;top:1711px;width:128px;height:2px;background:repeating-linear-gradient(90deg,#0176d3 0 2px,transparent 2px 3px);"></div>
<div class="t" style="left:1767.15px;top:1721.95px;font-size:27.27px;line-height:34px;color:#181818;">, 9/6/2022 9:57 PM</div>
<div class="r" style="left:1463px;top:1761px;width:253px;height:2px;background:#e5e5e5;"></div>
<div class="r" style="left:1760px;top:1761px;width:255px;height:2px;background:#e5e5e5;"></div>
<div class="t" style="left:1469.52px;top:1771.75px;font-size:23.51px;line-height:29px;color:#3e3e3c;">Subject</div>
<div class="t" style="left:1471.08px;top:1811.12px;font-size:25.91px;line-height:32px;color:#181818;">Test Email to Case</div>
<svg class="r" style="left:1973px;top:1805px" width="36" height="36" viewBox="0 0 36 36"><g transform="rotate(-40 19.5 18.5)" fill="#d6d6d6"><rect x="11" y="15" width="17" height="7" rx="0.8"/><rect x="29.5" y="15.25" width="4.5" height="6.5" rx="1"/><path d="M9.6 16 L9.6 21 L5.6 18.5 Z"/></g></svg>
<div class="r" style="left:1463px;top:1849px;width:552px;height:2px;background:#e5e5e5;"></div>
</body></html>
